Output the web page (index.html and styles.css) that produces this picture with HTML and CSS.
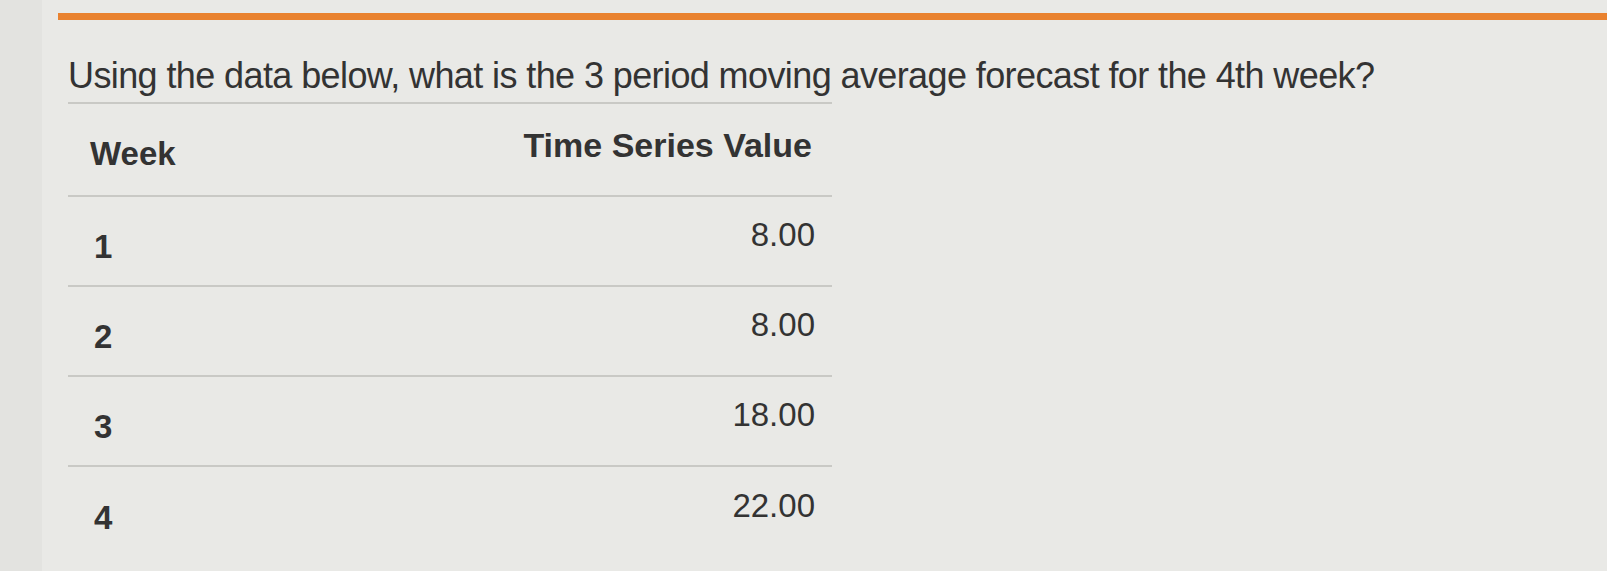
FILE: index.html
```html
<!DOCTYPE html>
<html>
<head>
<meta charset="utf-8">
<link rel="stylesheet" href="styles.css">
</head>
<body>
<div class="screen">
  <div class="edge"></div>
  <div class="sheet">
    <div class="accent"></div>
    <div class="content">
      <p class="question">Using the data below, what is the 3 period moving average forecast for the 4th week?</p>
      <table class="data">
        <thead>
          <tr class="head"><th class="c-week">Week</th><th class="c-val">Time Series Value</th></tr>
        </thead>
        <tbody>
          <tr class="row"><td class="c-week">1</td><td class="c-val">8.00</td></tr>
          <tr class="row"><td class="c-week">2</td><td class="c-val">8.00</td></tr>
          <tr class="row"><td class="c-week">3</td><td class="c-val">18.00</td></tr>
          <tr class="row"><td class="c-week">4</td><td class="c-val">22.00</td></tr>
        </tbody>
      </table>
    </div>
  </div>
</div>
</body>
</html>
```

FILE: styles.css
```css
html, body {
  margin: 0;
  padding: 0;
  height: 100%;
  overflow: hidden;
}
body {
  background: #e6e6e3;
  font-family: "Liberation Sans", Arial, sans-serif;
  color: #333333;
}
.screen {
  display: flex;
  height: 571px;
}
.edge {
  width: 42px;
  flex: none;
  background: #e3e3e0;
}
.sheet {
  flex: 1;
  background: #e9e9e6;
  padding-top: 13px;
}
.accent {
  height: 7px;
  margin-left: 16px;
  background: #e9822f;
}
.content {
  padding-left: 26px;
}
.question {
  margin: 34px 0 0 0;
  font-size: 36px;
  line-height: 43px;
  letter-spacing: -0.6px;
}
.data {
  margin-top: 5px;
  border-collapse: collapse;
  width: 764px;
  font-size: 33px;
}
.data th, .data td {
  border-top: 2px solid #c9c9c5;
  vertical-align: middle;
}
.data tr.head {
  height: 93px;
}
.data tr.row {
  height: 90px;
}
.data th {
  font-weight: bold;
}
.data th.c-week {
  text-align: left;
  padding: 9px 0 0 22px;
}
.data th.c-val {
  text-align: right;
  padding: 0 20px 8px 0;
  font-size: 34px;
}
.data td.c-week {
  text-align: left;
  font-weight: bold;
  padding: 12px 0 0 26px;
}
.data td.c-val {
  text-align: right;
  padding: 0 17px 12px 0;
}
```
